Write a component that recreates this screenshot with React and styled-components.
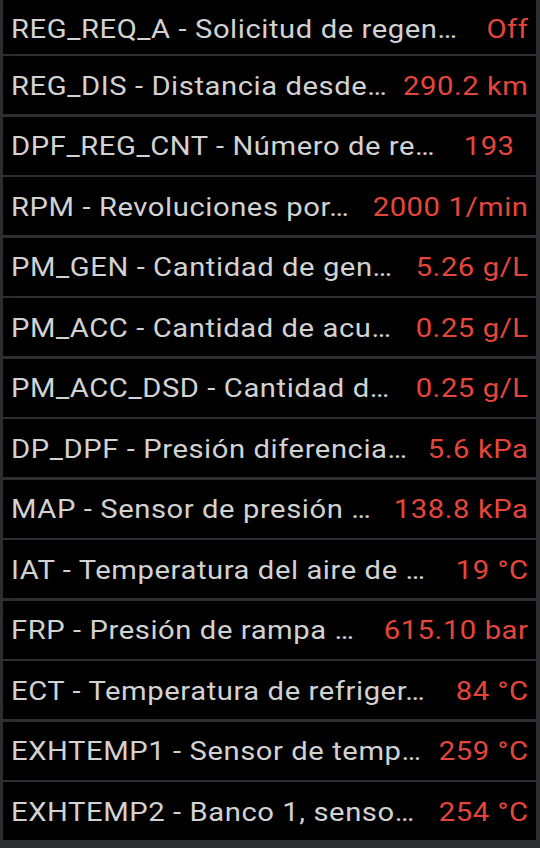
import styled, { createGlobalStyle } from "styled-components";

const GlobalStyle = createGlobalStyle`
    html, body {
        margin: 0;
        padding: 0;
        background: #2d2e32;
    }

    body {
        font-family: Roboto, "Noto Sans", sans-serif;
        overflow: hidden;
    }
`;

const STRETCH = 1.145;

const Screen = styled.div`
    width: 540px;
    height: 848px;
    overflow: hidden;
    background: #2d2e32;
    padding: 0 4px 0 3px;
    box-sizing: border-box;
`;

// list is scrolled a few pixels, so the first row is cut at the top
const List = styled.ul`
    list-style: none;
    margin: -4.5px 0 0;
    padding: 0;
    display: flex;
    flex-direction: column;
    gap: 2.54px;
`;

const Row = styled.li`
    height: 58px;
    background: #000;
    overflow: hidden;
`;

const Content = styled.div`
    display: flex;
    align-items: center;
    width: calc(100% / ${STRETCH});
    height: 100%;
    padding: ${(p) => (p.$first ? 8.6 : 1)}px 0 0 7px;
    box-sizing: border-box;
    transform: scaleX(${STRETCH});
    transform-origin: left center;
    font-size: 25.5px;
    letter-spacing: 0.5px;
    white-space: nowrap;
`;

const Label = styled.span`
    flex: 1;
    min-width: 0;
    overflow: hidden;
    color: #d2d2d2;
`;

const Value = styled.span`
    flex: none;
    padding-right: ${(p) => p.$inset || 6.5}px;
    padding-left: 6px;
    color: #e5463c;
`;

const readings = [
    { label: "REG_REQ_A - Solicitud de regen…", value: "Off" },
    { label: "REG_DIS - Distancia desde…", value: "290.2 km" },
    { label: "DPF_REG_CNT - Número de re…", value: "193", inset: 18.7 },
    { label: "RPM - Revoluciones por…", value: "2000 1/min" },
    { label: "PM_GEN - Cantidad de gen…", value: "5.26 g/L" },
    { label: "PM_ACC - Cantidad de acu…", value: "0.25 g/L" },
    { label: "PM_ACC_DSD - Cantidad d…", value: "0.25 g/L" },
    { label: "DP_DPF - Presión diferencia…", value: "5.6 kPa" },
    { label: "MAP - Sensor de presión …", value: "138.8 kPa" },
    { label: "IAT - Temperatura del aire de …", value: "19 °C" },
    { label: "FRP - Presión de rampa …", value: "615.10 bar" },
    { label: "ECT - Temperatura de refriger…", value: "84 °C" },
    { label: "EXHTEMP1 - Sensor de temp…", value: "259 °C" },
    { label: "EXHTEMP2 - Banco 1, senso…", value: "254 °C" },
];

function App() {
    return (
        <>
            <GlobalStyle />
            <Screen>
                <List>
                    {readings.map((r, i) => (
                        <Row key={r.label}>
                            <Content $first={i === 0}>
                                <Label>{r.label}</Label>
                                <Value $inset={r.inset}>{r.value}</Value>
                            </Content>
                        </Row>
                    ))}
                </List>
            </Screen>
        </>
    );
}

export default App;
